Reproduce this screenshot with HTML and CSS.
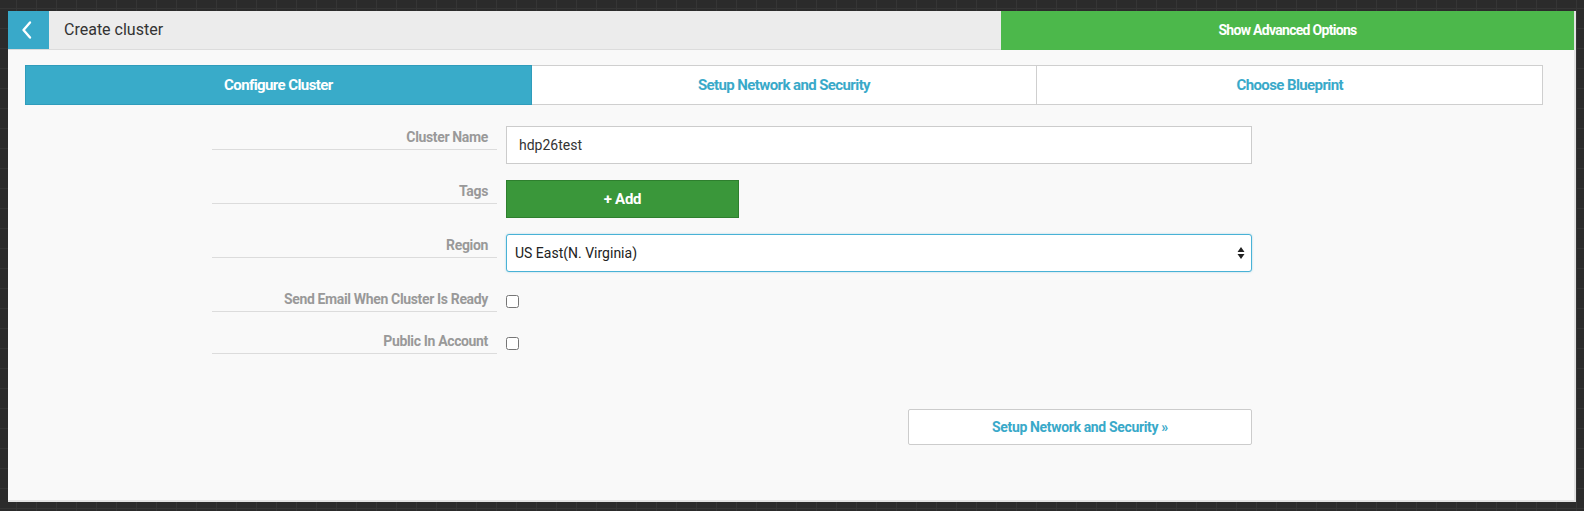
FILE: index.html
```html
<!DOCTYPE html>
<html lang="en">
<head>
    <meta charset="UTF-8">
    <title>Create cluster</title>
    <link rel="stylesheet" href="styles.css">
</head>
<body>
    <div class="panel">
        <div class="panel-header">
            <a class="back-btn" href="#">
                <svg width="14" height="20" viewBox="0 0 14 20"><path d="M10 2.5 L3.5 10 L10 17.5" fill="none" stroke="#fff" stroke-width="2.4" stroke-linecap="round" stroke-linejoin="round"/></svg>
            </a>
            <div class="panel-title">Create cluster</div>
            <a class="advanced-btn" href="#">Show Advanced Options</a>
        </div>

        <div class="panel-body">
            <div class="wizard-tabs">
                <div class="wizard-tab active">Configure Cluster</div>
                <div class="wizard-tab">Setup Network and Security</div>
                <div class="wizard-tab">Choose Blueprint</div>
            </div>

            <div class="cluster-form">
                <div class="form-row">
                    <label class="form-label">Cluster Name</label>
                    <div class="form-field">
                        <input class="text-input" type="text" value="hdp26test">
                    </div>
                </div>
                <div class="form-row">
                    <label class="form-label">Tags</label>
                    <div class="form-field">
                        <button class="add-btn">+ Add</button>
                    </div>
                </div>
                <div class="form-row">
                    <label class="form-label">Region</label>
                    <div class="form-field">
                        <div class="select-wrap">
                            <select class="select-input">
                                <option>US East(N. Virginia)</option>
                            </select>
                            <svg class="select-arrows" width="8" height="14" viewBox="0 0 8 14"><path d="M4 1 L7.5 6 L0.5 6 Z M4 13 L7.5 8 L0.5 8 Z" fill="#222"/></svg>
                        </div>
                    </div>
                </div>
                <div class="form-row short">
                    <label class="form-label">Send Email When Cluster Is Ready</label>
                    <div class="form-field">
                        <input class="check" type="checkbox">
                    </div>
                </div>
                <div class="form-row short">
                    <label class="form-label">Public In Account</label>
                    <div class="form-field">
                        <input class="check" type="checkbox">
                    </div>
                </div>

                <div class="form-actions">
                    <button class="next-btn">Setup Network and Security &raquo;</button>
                </div>
            </div>
        </div>
    </div>
</body>
</html>
```

FILE: styles.css
```css
/* Create cluster wizard */
body {
    margin: 0;
    height: 511px;
    overflow: hidden;
    background-color: #2b2b2b;
    background-image:
        linear-gradient(to right, #353535 1px, transparent 1px),
        linear-gradient(to bottom, #353535 1px, transparent 1px);
    background-size: 20px 20px;
    background-position: 16px 8px;
    font-family: Roboto, "Liberation Sans", sans-serif;
}
.panel {
    margin: 11px 0 0 8px;
    width: 1566px;
    height: 489px;
    background-color: #f9f9f9;
    border-right: 2px solid #e2e2e2;
    border-bottom: 2px solid #e2e2e2;
    display: flex;
    flex-direction: column;
}
.panel-header {
    display: flex;
    height: 38px;
    background-color: #ececec;
    border-bottom: 1px solid #dcdcdc;
}
.back-btn {
    width: 41px;
    background-color: #39a9c9;
    display: flex;
    align-items: center;
    justify-content: center;
    padding-right: 4px;
    box-sizing: border-box;
}
.panel-title {
    flex: 1;
    padding-left: 15px;
    line-height: 38px;
    font-size: 16px;
    color: #333;
}
.advanced-btn {
    width: 573px;
    background-color: #4cb84b;
    color: #fff;
    text-decoration: none;
    text-align: center;
    line-height: 38px;
    font-size: 14px;
    font-weight: bold;
    letter-spacing: -0.7px;
    margin-bottom: -1px;
}
.panel-body {
    padding: 15px 31px 0 17px;
}
.wizard-tabs {
    display: flex;
    height: 40px;
}
.wizard-tab {
    flex: 1;
    border: 1px solid #cfcfcf;
    border-left: none;
    background-color: #fff;
    color: #39a9c9;
    font-size: 15px;
    font-weight: bold;
    letter-spacing: -0.6px;
    text-align: center;
    line-height: 38px;
}
.wizard-tab:first-child {
    border-left: 1px solid #cfcfcf;
}
.wizard-tab.active {
    background-color: #39abc9;
    border-color: #2f9cbb;
    color: #fff;
}
.cluster-form {
    margin-top: 21px;
    padding-left: 187px;
}
.form-row {
    display: flex;
    align-items: flex-start;
    gap: 9px;
    height: 54px;
}
.form-row.short {
    height: 42px;
}
.form-label {
    width: 285px;
    height: 24px;
    padding-top: 3px;
    padding-right: 9px;
    box-sizing: border-box;
    border-bottom: 1px solid #dcdcdc;
    text-align: right;
    font-size: 14px;
    font-weight: bold;
    letter-spacing: -0.35px;
    color: #999;
    line-height: 16px;
}
.form-field {
    width: 746px;
}
.text-input {
    width: 100%;
    height: 38px;
    box-sizing: border-box;
    border: 1px solid #ccc;
    background-color: #fff;
    padding: 0 12px;
    font-family: Roboto, "Liberation Sans", sans-serif;
    font-size: 14px;
    color: #333;
    outline: none;
}
.add-btn {
    width: 233px;
    height: 38px;
    border: 1px solid #2e7f2e;
    background-color: #3a973a;
    color: #fff;
    font-family: Roboto, "Liberation Sans", sans-serif;
    font-size: 15px;
    font-weight: bold;
    letter-spacing: -0.3px;
}
.select-wrap {
    position: relative;
}
.select-input {
    width: 100%;
    height: 38px;
    border: 1px solid #49b2d6;
    border-radius: 3px;
    background-color: #fff;
    padding: 0 8px;
    font-family: Roboto, "Liberation Sans", sans-serif;
    font-size: 14px;
    color: #222;
    appearance: none;
    -webkit-appearance: none;
    outline: none;
    box-shadow: 0 0 2px rgba(73, 178, 214, 0.5);
}
.select-arrows {
    position: absolute;
    right: 7px;
    top: 12px;
}
.check {
    margin: 7px 0 0 0;
    width: 13px;
    height: 13px;
}
.form-actions {
    display: flex;
    justify-content: flex-end;
    width: 1040px;
    margin-top: 37px;
}
.next-btn {
    width: 344px;
    height: 36px;
    border: 1px solid #ccc;
    border-radius: 2px;
    background-color: #fff;
    color: #39a9c9;
    font-family: Roboto, "Liberation Sans", sans-serif;
    font-size: 14px;
    font-weight: bold;
    letter-spacing: -0.35px;
}
```
